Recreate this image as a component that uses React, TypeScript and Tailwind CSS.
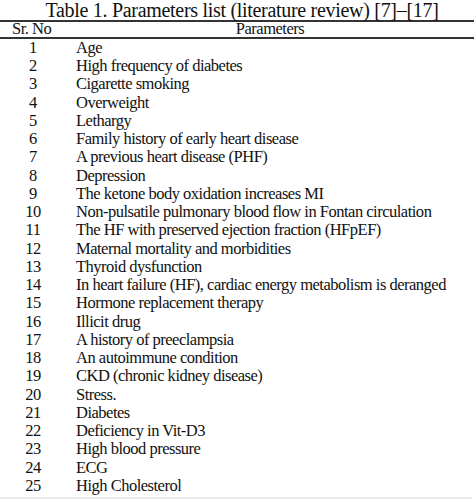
const rows = [
  "Age",
  "High frequency of diabetes",
  "Cigarette smoking",
  "Overweight",
  "Lethargy",
  "Family history of early heart disease",
  "A previous heart disease (PHF)",
  "Depression",
  "The ketone body oxidation increases MI",
  "Non-pulsatile pulmonary blood flow in Fontan circulation",
  "The HF with preserved ejection fraction (HFpEF)",
  "Maternal mortality and morbidities",
  "Thyroid dysfunction",
  "In heart failure (HF), cardiac energy metabolism is deranged",
  "Hormone replacement therapy",
  "Illicit drug",
  "A history of preeclampsia",
  "An autoimmune condition",
  "CKD (chronic kidney disease)",
  "Stress.",
  "Diabetes",
  "Deficiency in Vit-D3",
  "High blood pressure",
  "ECG",
  "High Cholesterol",
];

export default function App() {
  return (
    <div
      className="w-[474px] h-[499px] bg-white text-[#111] overflow-hidden"
      style={{ fontFamily: '"Liberation Serif", "Times New Roman", serif' }}
    >
      <div className="h-[20px] pl-[10px] text-center text-[20px] leading-[20px] tracking-[-0.015em]">
        Table 1. Parameters list (literature review) [7]–[17]
      </div>
      <div className="border-t-2 border-b-2 border-[#333] flex h-[19px] items-center text-[16.5px] leading-none tracking-[-0.03em]">
        <div className="w-[66px] pl-[12px]">Sr. No</div>
        <div className="flex-1 text-center">Parameters</div>
      </div>
      <div className="flex flex-col">
        {rows.map((r, i) => (
          <div key={i} className="flex h-[18.25px] items-center text-[16.5px] leading-none tracking-[-0.03em]">
            <div className="w-[66px] text-center">{i + 1}</div>
            <div className="pl-[10px]">{r}</div>
          </div>
        ))}
      </div>
      <div className="mt-[2px] h-[2px] w-[472px] bg-[#ebebeb]" />
    </div>
  );
}
